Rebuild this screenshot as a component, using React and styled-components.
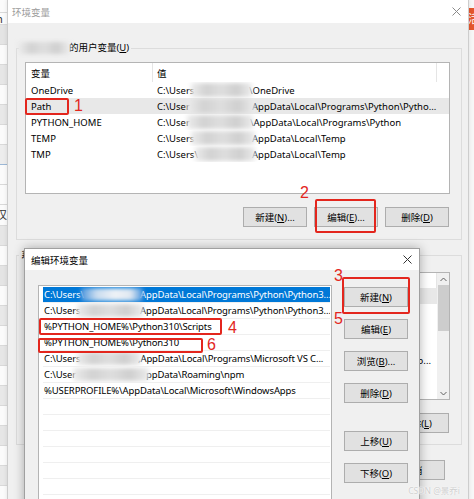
import React from 'react'
import styled, { createGlobalStyle } from 'styled-components'

const GlobalStyle = createGlobalStyle`
  html, body { margin: 0; padding: 0; }
  body {
    width: 474px;
    height: 499px;
    overflow: hidden;
    font-family: "Noto Sans", "Noto Sans CJK SC", sans-serif;
    font-size: 9.5px;
    color: #000;
  }
  #root { width: 474px; height: 499px; }
`

const Desktop = styled.div`
  position: relative;
  width: 474px;
  height: 499px;
  overflow: hidden;
  background: #f7f7f7;
`

// sliver of some other window peeking out at the left edge
const BehindStrip = styled.div`
  position: absolute;
  left: 0;
  top: 0;
  width: 7px;
  height: 499px;
  display: flex;
  flex-direction: column;
  overflow: hidden;
  background: #fbfbfb;
`
const StripCell = styled.div`
  flex-shrink: 0;
  height: ${p => p.h}px;
  line-height: ${p => p.h}px;
  background: ${p => p.shade || '#fbfbfb'};
  border-bottom: 1px solid ${p => p.line || '#d9d9d9'};
  font-size: 11px;
  color: #333;
  text-indent: -4px;
  white-space: nowrap;
  overflow: hidden;
`

const OrangeTab = styled.div`
  position: absolute;
  right: 0;
  top: 8px;
  width: 6px;
  height: 22px;
  background: #e4572e;
  color: #fff;
  font-size: 11px;
  line-height: 22px;
  overflow: hidden;
  white-space: nowrap;
`

const Window = styled.div`
  position: absolute;
  left: ${p => p.x}px;
  top: ${p => p.y}px;
  width: ${p => p.w}px;
  height: ${p => p.h}px;
  box-sizing: border-box;
  display: flex;
  flex-direction: column;
  background: #f0f0f0;
  border: 1px solid ${p => (p.active ? '#a0a0a0' : '#cdcdcd')};
  box-shadow: ${p => (p.active ? '0 0 10px rgba(0,0,0,0.3)' : '0 0 4px rgba(0,0,0,0.1)')};
`
const TitleBar = styled.div`
  flex-shrink: 0;
  height: ${p => p.h}px;
  display: flex;
  align-items: center;
  justify-content: space-between;
  padding-left: ${p => p.pl}px;
  background: #fff;
  color: ${p => (p.active ? '#000' : '#9b9b9b')};
`
const CloseBox = styled.span`
  width: 24px;
  display: flex;
  justify-content: center;
`

const BackBody = styled.div`
  padding: 0 6px 0 8px;
  display: flex;
  flex-direction: column;
`

const Group = styled.fieldset`
  margin: ${p => p.mt}px 0 0 0;
  padding: ${p => p.pad};
  width: 446px;
  min-width: 0;
  box-sizing: border-box;
  border: 1px solid #dcdcdc;
  display: flex;
  flex-direction: column;
`
const GroupLabel = styled.legend`
  margin-left: -6px;
  padding: 0 2px;
  line-height: 14px;
  display: flex;
  align-items: center;
  white-space: nowrap;
`

const ListView = styled.div`
  height: ${p => p.h}px;
  box-sizing: border-box;
  background: #fff;
  border: 1px solid #b4b4b4;
  overflow: hidden;
  display: flex;
`
const ListMain = styled.div`
  flex: 1;
  min-width: 0;
  display: flex;
  flex-direction: column;
`
const ListHead = styled.div`
  display: grid;
  grid-template-columns: 127px 284px;
  height: ${p => p.h}px;
  flex-shrink: 0;
`
const HeadCell = styled.div`
  padding-left: ${p => p.pl}px;
  border-right: 1px solid #e5e5e5;
  display: flex;
  align-items: center;
`
const VarRow = styled.div`
  display: grid;
  grid-template-columns: 127px 284px;
  height: 16px;
  flex-shrink: 0;
  background: ${p => (p.sel ? '#e8e8e8' : 'transparent')};
  white-space: nowrap;
`
const Cell = styled.div`
  padding-left: ${p => p.pl}px;
  display: flex;
  align-items: center;
  overflow: hidden;
`
const Prefix = styled.span`
  flex-shrink: 0;
  width: ${p => p.w}px;
  display: flex;
  align-self: stretch;
  align-items: center;
`
const Smudge = styled.span`
  flex: ${p => (p.w ? `0 0 ${p.w}px` : 1)};
  align-self: stretch;
  margin: 1px -3px 1px -3px;
  background: ${p =>
    p.light
      ? 'linear-gradient(90deg, #4f97dd, #c9dcef 25%, #eef2f6 55%, #dfe8f1 80%, #4f97dd)'
      : 'linear-gradient(90deg, #ececec, #d2d2d2 25%, #dedede 50%, #cfcfcf 75%, #ececec)'};
  filter: blur(2px);
`

const ScrollBar = styled.div`
  width: 12px;
  flex-shrink: 0;
  background: #f0f0f0;
  display: flex;
  flex-direction: column;
  align-items: center;
`
const ScrollArrow = styled.div`
  height: 12px;
  display: flex;
  align-items: center;
  justify-content: center;
`
const ScrollThumb = styled.div`
  width: 11px;
  height: 46px;
  background: #cdcdcd;
`
const ScrollSpace = styled.div`
  flex: 1;
`

const ButtonRow = styled.div`
  display: flex;
  justify-content: flex-end;
  gap: 7px;
  margin-top: ${p => p.mt}px;
  padding-right: ${p => p.pr || 0}px;
`
const Btn = styled.button`
  width: 64px;
  height: 20px;
  padding: 0;
  flex-shrink: 0;
  box-sizing: border-box;
  background: #e1e1e1;
  border: 1px solid #adadad;
  font: inherit;
  color: #000;
  display: flex;
  align-items: center;
  justify-content: center;
  margin-top: ${p => p.mt || 0}px;
`

const EditBody = styled.div`
  display: flex;
  gap: 12px;
  padding: 15px 0 0 13px;
`
const PathList = styled.div`
  width: 294px;
  height: 240px;
  box-sizing: border-box;
  padding: 1px 1px 0 4px;
  background: #fff;
  border: 1px solid #b4b4b4;
  display: flex;
  flex-direction: column;
  overflow: hidden;
  letter-spacing: -0.12px;
`
const PathRow = styled.div`
  height: 16px;
  flex-shrink: 0;
  box-sizing: border-box;
  padding-left: 1px;
  border-bottom: 1px solid #efefef;
  display: flex;
  align-items: center;
  white-space: nowrap;
  overflow: hidden;
  background: ${p => (p.sel ? '#0078d7' : 'transparent')};
  color: ${p => (p.sel ? '#fff' : '#000')};
`
const ButtonColumn = styled.div`
  display: flex;
  flex-direction: column;
  gap: 12px;
  margin-top: 2px;
`

const Mark = styled.div`
  position: absolute;
  left: ${p => p.x}px;
  top: ${p => p.y}px;
  width: ${p => p.w}px;
  height: ${p => p.h}px;
  box-sizing: border-box;
  border: 2px solid #e3261d;
  border-radius: 2px;
`
const Num = styled.span`
  position: absolute;
  left: ${p => p.x}px;
  top: ${p => p.y}px;
  font-family: "Liberation Sans", Arial, sans-serif;
  font-size: 16px;
  line-height: 16px;
  color: #e3261d;
`
const Watermark = styled.span`
  position: absolute;
  right: 14px;
  bottom: 3px;
  font-size: 8.5px;
  color: #cfcfcf;
  text-shadow: 0 0 1px #fff, 0 0 2px #fff;
`

function CloseIcon({ color }) {
  return (
    <svg width="9" height="9" viewBox="0 0 9 9">
      <path d="M0.5 0.5 L8.5 8.5 M8.5 0.5 L0.5 8.5" stroke={color} strokeWidth="1" />
    </svg>
  )
}

function Chevron({ up }) {
  return (
    <svg width="7" height="5" viewBox="0 0 7 5">
      <path d={up ? 'M0.5 4 L3.5 1 L6.5 4' : 'M0.5 1 L3.5 4 L6.5 1'} stroke="#606060" strokeWidth="1" fill="none" />
    </svg>
  )
}

const Key = ({ children }) => <u>{children}</u>

const userVars = [
  { name: 'OneDrive', pre: 'C:\\Users', w: 92, tail: '\\OneDrive' },
  { name: 'Path', pre: 'C:\\User', w: 95, tail: 'AppData\\Local\\Programs\\Python\\Pytho...', sel: true },
  { name: 'PYTHON_HOME', pre: 'C:\\User', w: 93, tail: '\\AppData\\Local\\Programs\\Python' },
  { name: 'TEMP', pre: 'C:\\Users', w: 95, tail: 'AppData\\Local\\Temp' },
  { name: 'TMP', pre: 'C:\\Users\\', w: 95, tail: 'AppData\\Local\\Temp' },
]

// system variables: only the right end of this list peeks out from under the front dialog
const sysVars = [
  { name: 'ComSpec', sel: true },
  { name: 'DriverData' },
  { name: 'NUMBER_OF_PROCESSORS' },
  { name: 'OS' },
  { name: 'Path', end: 'o...' },
  { name: 'PATHEXT' },
  { name: 'PROCESSOR_ARCHITECTURE' },
]

const pathEntries = [
  { pre: 'C:\\Users\\', w: 96, tail: 'AppData\\Local\\Programs\\Python\\Python3...', sel: true },
  { pre: 'C:\\Users', w: 96, tail: 'AppData\\Local\\Programs\\Python\\Python3...' },
  { text: '%PYTHON_HOME%\\Python310\\Scripts' },
  { text: '%PYTHON_HOME%\\Python310' },
  { pre: 'C:\\Users', w: 94, tail: ',AppData\\Local\\Programs\\Microsoft VS C...' },
  { pre: 'C:\\User', w: 102, tail: 'ppData\\Roaming\\npm' },
  { text: '%USERPROFILE%\\AppData\\Local\\Microsoft\\WindowsApps' },
]

const strip = [
  { h: 12 }, { h: 11, txt: 'h' }, { h: 19, shade: '#e4e4e4' }, { h: 19 }, { h: 19, shade: '#e6e6e6' },
  { h: 19 }, { h: 19, shade: '#e8e8e8' }, { h: 19 }, { h: 19, shade: '#ededed', line: '#9cb8d6' },
  { h: 19 }, { h: 19 }, { h: 20, txt: '汉' }, { h: 19, shade: '#e6e6e6' }, { h: 19 },
  { h: 19, shade: '#e4e4e4' }, { h: 19 }, { h: 19, shade: '#e8e8e8' }, { h: 19 }, { h: 19, shade: '#e6e6e6' },
  { h: 19 }, { h: 19, shade: '#e8e8e8' }, { h: 19 }, { h: 19, shade: '#e6e6e6' }, { h: 19 },
  { h: 19, shade: '#e8e8e8' }, { h: 19 },
]

export default function App() {
  return (
    <Desktop>
      <GlobalStyle />

      <BehindStrip>
        {strip.map((s, i) => (
          <StripCell key={i} h={s.h} shade={s.shade} line={s.line}>{s.txt}</StripCell>
        ))}
      </BehindStrip>
      <OrangeTab>活</OrangeTab>

      {/* 环境变量 dialog, inactive, behind */}
      <Window x={7} y={-1} w={462} h={540}>
        <TitleBar h={23} pl={4}>
          <span>环境变量</span>
          <CloseBox><CloseIcon color="#8a8a8a" /></CloseBox>
        </TitleBar>
        <BackBody>
          <Group mt={18} pad="7px 11px 12px 8px">
            <GroupLabel>
              <Smudge w={52} />
              <span style={{ marginLeft: 2 }}>的用户变量(<Key>U</Key>)</span>
            </GroupLabel>
            <ListView h={132}>
              <ListMain>
                <ListHead h={19}>
                  <HeadCell pl={5}>变量</HeadCell>
                  <HeadCell pl={4}>值</HeadCell>
                </ListHead>
                {userVars.map(v => (
                  <VarRow key={v.name} sel={v.sel}>
                    <Cell pl={5}>{v.name}</Cell>
                    <Cell pl={4}>
                      <Prefix w={v.w}>
                        {v.pre}
                        <Smudge />
                      </Prefix>
                      {v.tail}
                    </Cell>
                  </VarRow>
                ))}
              </ListMain>
            </ListView>
            <ButtonRow mt={13} pr={1}>
              <Btn>新建(<Key>N</Key>)...</Btn>
              <Btn>编辑(<Key>E</Key>)...</Btn>
              <Btn>删除(<Key>D</Key>)</Btn>
            </ButtonRow>
          </Group>

          <Group mt={8} pad="10px 11px 11px 8px">
            <GroupLabel>系统变量(<Key>S</Key>)</GroupLabel>
            <ListView h={128}>
              <ListMain>
                <ListHead h={15}>
                  <HeadCell pl={5} />
                  <HeadCell pl={4} />
                </ListHead>
                {sysVars.map(v => (
                  <VarRow key={v.name} sel={v.sel}>
                    <Cell pl={5} />
                    <Cell pl={4} style={{ justifyContent: 'flex-end', paddingRight: 6 }}>{v.end}</Cell>
                  </VarRow>
                ))}
              </ListMain>
              <ScrollBar>
                <ScrollArrow><Chevron up /></ScrollArrow>
                <ScrollThumb />
                <ScrollSpace />
                <ScrollArrow><Chevron /></ScrollArrow>
              </ScrollBar>
            </ListView>
            <ButtonRow mt={13} pr={1}>
              <Btn />
              <Btn />
              <Btn>删除(<Key>L</Key>)</Btn>
            </ButtonRow>
          </Group>

          <ButtonRow mt={15} pr={17}>
            <Btn />
            <Btn>取消</Btn>
          </ButtonRow>
        </BackBody>
      </Window>

      {/* 编辑环境变量 dialog, active, in front */}
      <Window x={24} y={248} w={396} h={270} active>
        <TitleBar h={21} pl={6} active>
          <span>编辑环境变量</span>
          <CloseBox><CloseIcon color="#333" /></CloseBox>
        </TitleBar>
        <EditBody>
          <PathList>
            {pathEntries.map((p, i) => (
              <PathRow key={i} sel={p.sel}>
                {p.text || (
                  <>
                    <Prefix w={p.w}>
                      {p.pre}
                      <Smudge light={p.sel} />
                    </Prefix>
                    {p.tail}
                  </>
                )}
              </PathRow>
            ))}
            {Array.from({ length: 8 }).map((_, i) => (
              <PathRow key={'e' + i} />
            ))}
          </PathList>
          <ButtonColumn>
            <Btn>新建(<Key>N</Key>)</Btn>
            <Btn>编辑(<Key>E</Key>)</Btn>
            <Btn>浏览(<Key>B</Key>)...</Btn>
            <Btn>删除(<Key>D</Key>)</Btn>
            <Btn mt={16}>上移(<Key>U</Key>)</Btn>
            <Btn>下移(<Key>O</Key>)</Btn>
          </ButtonColumn>
        </EditBody>
      </Window>

      {/* red annotations */}
      <Mark x={25} y={98} w={44} h={17} />
      <Num x={74} y={98}>1</Num>
      <Mark x={315} y={199} w={61} h={34} />
      <Num x={300} y={185}>2</Num>
      <Mark x={342} y={277} w={68} h={37} />
      <Num x={334} y={268}>3</Num>
      <Mark x={39} y={318} w={183} h={17} />
      <Num x={228} y={320}>4</Num>
      <Num x={334} y={311}>5</Num>
      <Mark x={38} y={338} w={165} h={15} />
      <Num x={207} y={337}>6</Num>

      <Watermark>CSDN @景乔i</Watermark>
    </Desktop>
  )
}
